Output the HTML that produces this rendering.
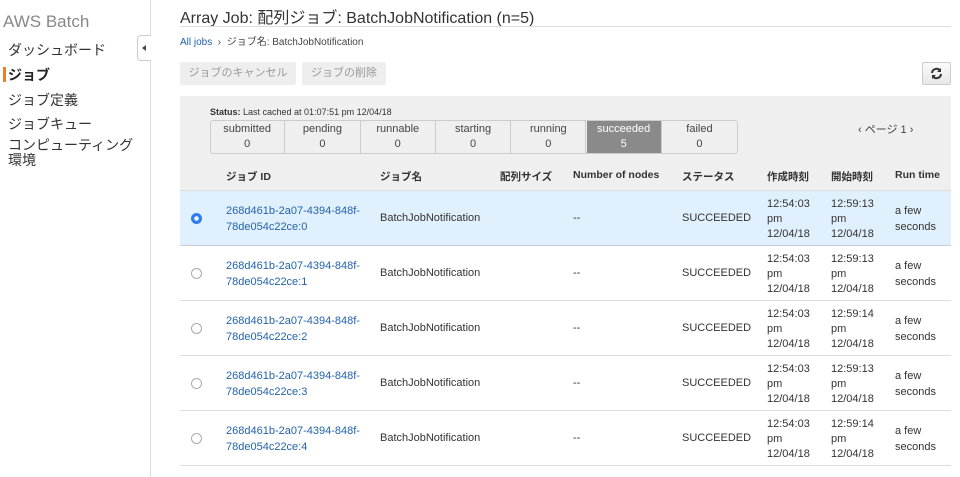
<!DOCTYPE html>
<html><head><meta charset="utf-8"><style>
*{margin:0;padding:0;box-sizing:border-box}
body{width:960px;height:477px;background:#fff;font-family:"Liberation Sans","Noto Sans CJK JP",sans-serif;color:#333;position:relative;overflow:hidden}
.a{position:absolute;white-space:nowrap}
.nav{font-size:14px;color:#333;left:8px}
.sc{position:absolute;top:121px;height:32px;width:75.3px;border-right:1px solid #ccc;text-align:center;font-size:11px;line-height:15px;padding-top:1px;color:#444}
.th{position:absolute;top:169px;font-size:10.5px;font-weight:bold;color:#333}
.row{position:absolute;left:180px;width:771px;height:55px;border-bottom:1px solid #ddd;font-size:11px}
.row div{position:absolute}
.rd{left:11px;top:22px;width:11px;height:11px;border:1px solid #aaa;border-radius:50%;background:#fff}
.id{left:46px;top:12px;color:#2463ad;line-height:16px}
.nm{left:200px;top:21px}
.dd{left:393px;top:21px}
.st{left:502px;top:21px}
.t1{left:587px;top:6px;line-height:15px}
.t2{left:651px;top:6px;line-height:15px}
.rt{left:715px;top:12px;line-height:16px}
</style></head><body>
<div class="a" style="left:3px;top:12px;font-size:17px;color:#888">AWS Batch</div>
<div class="a nav" style="top:40px">ダッシュボード</div>
<div class="a" style="left:3px;top:67px;width:3px;height:15px;background:#e8812a"></div>
<div class="a nav" style="top:65px;font-weight:bold;color:#222">ジョブ</div>
<div class="a nav" style="top:90px">ジョブ定義</div>
<div class="a nav" style="top:114px">ジョブキュー</div>
<div class="a nav" style="top:138px;line-height:15px">コンピューティング<br>環境</div>
<div class="a" style="left:150px;top:0;width:1px;height:477px;background:#ddd"></div>
<div class="a" style="left:137px;top:35px;width:14px;height:26px;border:1px solid #ccc;border-right:none;border-radius:4px 0 0 4px;background:#fff"></div>
<div class="a" style="left:142px;top:45px;width:0;height:0;border-top:3px solid transparent;border-bottom:3px solid transparent;border-right:4px solid #444"></div>

<div class="a" style="left:180px;top:4px;font-size:16px;color:#333">Array Job: 配列ジョブ: BatchJobNotification (n=5)</div>
<div class="a" style="left:180px;top:26px;width:771px;height:1px;background:#ddd"></div>
<div class="a" style="left:180px;top:33px;font-size:10px;color:#444"><span style="color:#2463ad">All jobs</span> &nbsp;›&nbsp; ジョブ名: BatchJobNotification</div>
<div class="a" style="left:180px;top:62px;width:116px;height:23px;background:#eee;border-radius:2px;font-size:11px;color:#999;text-align:center;line-height:23px">ジョブのキャンセル</div>
<div class="a" style="left:302px;top:62px;width:84px;height:23px;background:#eee;border-radius:2px;font-size:11px;color:#999;text-align:center;line-height:23px">ジョブの削除</div>
<div class="a" style="left:922px;top:62px;width:29px;height:23px;background:linear-gradient(#fafafa,#e8e8e8);border:1px solid #ccc;border-radius:2px"></div>
<svg class="a" style="left:930px;top:67px" width="13" height="13" viewBox="0 0 13 13"><path d="M2 6A4.5 4.5 0 0 1 10 3.5M11 7A4.5 4.5 0 0 1 3 9.5" stroke="#333" stroke-width="2" fill="none"/><path d="M11 1v4H7z M2 12V8h4z" fill="#333"/></svg>

<div class="a" style="left:180px;top:96px;width:771px;height:95px;background:#efefef;border-bottom:1px solid #ddd"></div>
<div class="a" style="left:210px;top:107px;font-size:9px;color:#333"><b>Status:</b> Last cached at 01:07:51 pm 12/04/18</div>
<div class="a" style="left:210px;top:120px;width:528px;height:34px;border:1px solid #ccc;border-radius:3px;background:#efefef"></div>
<div class="sc" style="left:210px">submitted<br>0</div>
<div class="sc" style="left:285.3px">pending<br>0</div>
<div class="sc" style="left:360.6px">runnable<br>0</div>
<div class="sc" style="left:435.9px">starting<br>0</div>
<div class="sc" style="left:511.2px">running<br>0</div>
<div class="sc" style="left:586.5px;background:#8a8a8a;color:#fff">succeeded<br>5</div>
<div class="sc" style="left:661.8px;border-right:none">failed<br>0</div>
<div class="a" style="left:858px;top:121px;font-size:11px;color:#444">‹ ページ 1 ›</div>

<div class="th" style="left:226px">ジョブ ID</div>
<div class="th" style="left:380px">ジョブ名</div>
<div class="th" style="left:500px">配列サイズ</div>
<div class="th" style="left:573px">Number of nodes</div>
<div class="th" style="left:682px">ステータス</div>
<div class="th" style="left:767px">作成時刻</div>
<div class="th" style="left:831px">開始時刻</div>
<div class="th" style="left:895px">Run time</div>

<div class="row" style="top:191px;background:#e1f0fd;border-bottom-color:#ccd">
<div class="rd" style="border:none;background:radial-gradient(circle,#fff 0 2px,#2b7de9 2.5px)"></div>
<div class="id">268d461b-2a07-4394-848f-<br>78de054c22ce:0</div><div class="nm">BatchJobNotification</div><div class="dd">--</div><div class="st">SUCCEEDED</div>
<div class="t1">12:54:03<br>pm<br>12/04/18</div><div class="t2">12:59:13<br>pm<br>12/04/18</div><div class="rt">a few<br>seconds</div></div>
<div class="row" style="top:246px"><div class="rd"></div>
<div class="id">268d461b-2a07-4394-848f-<br>78de054c22ce:1</div><div class="nm">BatchJobNotification</div><div class="dd">--</div><div class="st">SUCCEEDED</div>
<div class="t1">12:54:03<br>pm<br>12/04/18</div><div class="t2">12:59:13<br>pm<br>12/04/18</div><div class="rt">a few<br>seconds</div></div>
<div class="row" style="top:301px"><div class="rd"></div>
<div class="id">268d461b-2a07-4394-848f-<br>78de054c22ce:2</div><div class="nm">BatchJobNotification</div><div class="dd">--</div><div class="st">SUCCEEDED</div>
<div class="t1">12:54:03<br>pm<br>12/04/18</div><div class="t2">12:59:14<br>pm<br>12/04/18</div><div class="rt">a few<br>seconds</div></div>
<div class="row" style="top:356px"><div class="rd"></div>
<div class="id">268d461b-2a07-4394-848f-<br>78de054c22ce:3</div><div class="nm">BatchJobNotification</div><div class="dd">--</div><div class="st">SUCCEEDED</div>
<div class="t1">12:54:03<br>pm<br>12/04/18</div><div class="t2">12:59:13<br>pm<br>12/04/18</div><div class="rt">a few<br>seconds</div></div>
<div class="row" style="top:411px"><div class="rd"></div>
<div class="id">268d461b-2a07-4394-848f-<br>78de054c22ce:4</div><div class="nm">BatchJobNotification</div><div class="dd">--</div><div class="st">SUCCEEDED</div>
<div class="t1">12:54:03<br>pm<br>12/04/18</div><div class="t2">12:59:14<br>pm<br>12/04/18</div><div class="rt">a few<br>seconds</div></div>
</body></html>
